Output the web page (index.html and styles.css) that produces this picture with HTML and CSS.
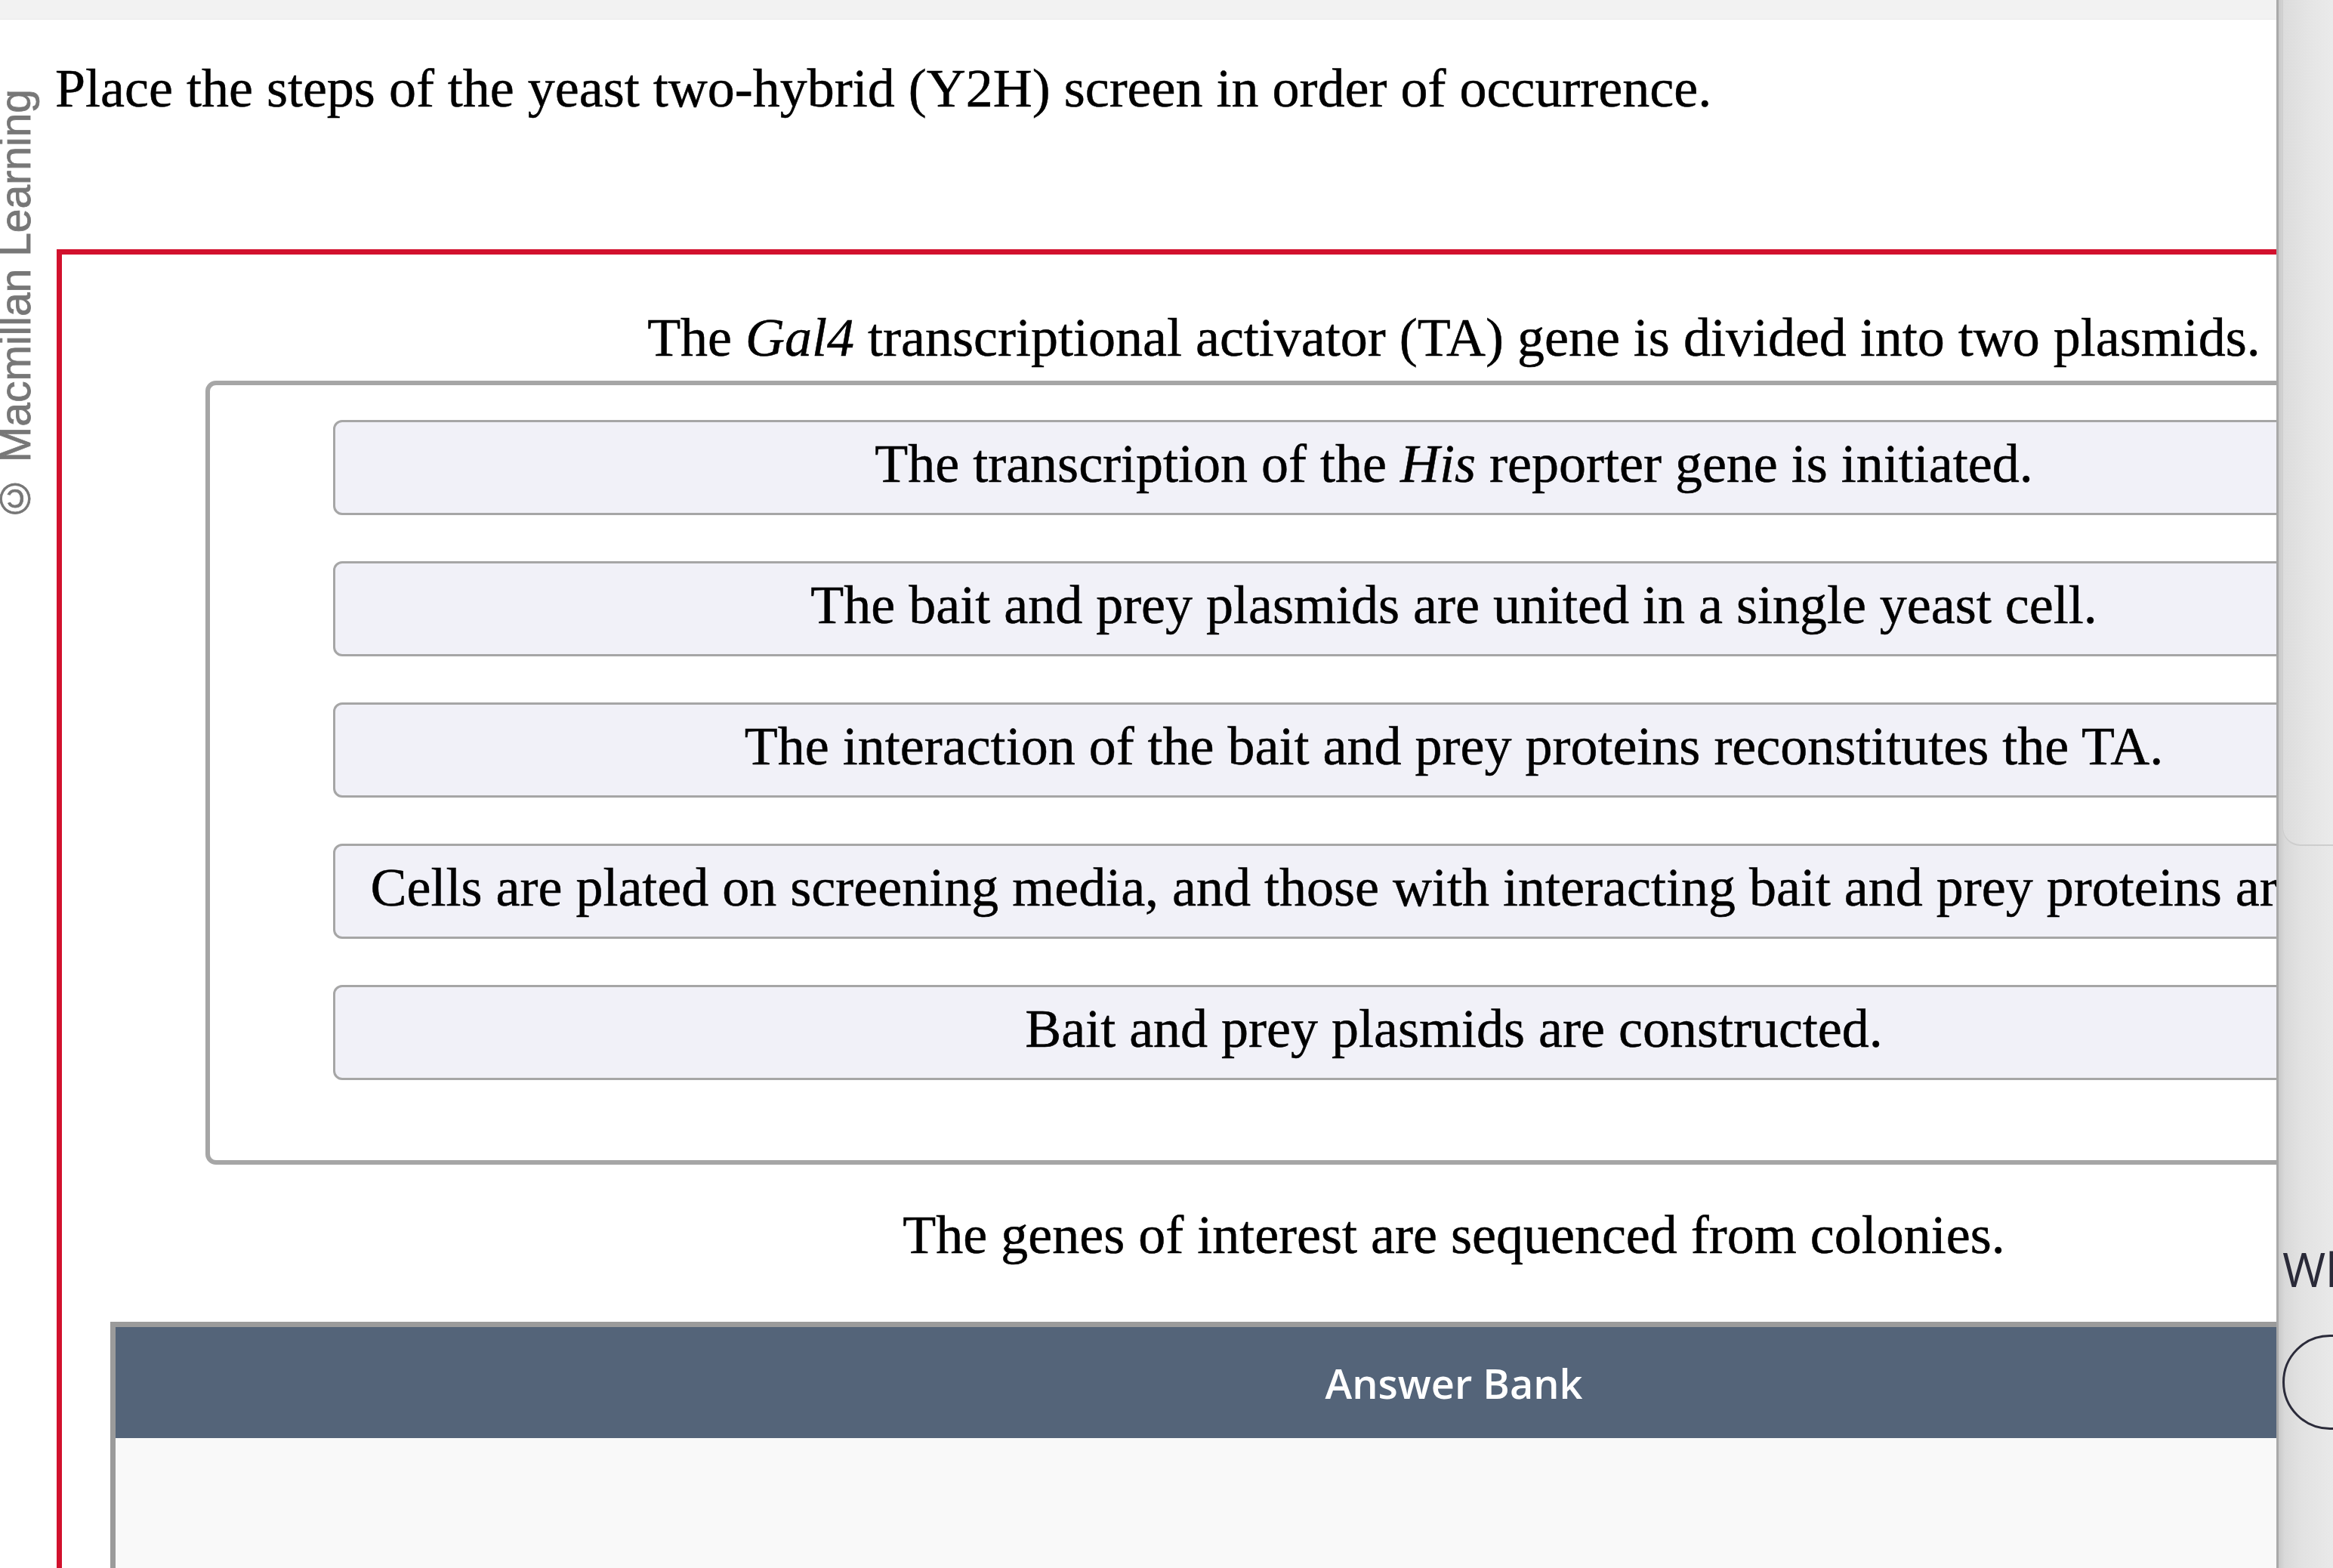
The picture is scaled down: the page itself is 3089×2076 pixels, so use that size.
FILE: index.html
```html
<!DOCTYPE html>
<html lang="en">
<head>
<meta charset="utf-8">
<title>Yeast two-hybrid screen ordering</title>
<link rel="stylesheet" href="styles.css">
</head>
<body>
  <div class="stage">
    <div class="topbar"></div>
    <div class="layout">
      <div class="credit-col">
        <div class="credit">© Macmillan Learning</div>
      </div>
      <div class="content">
        <h1 class="prompt">Place the steps of the yeast two-hybrid (Y2H) screen in order of occurrence.</h1>
        <div class="frame">
          <p class="anchor">The <i>Gal4</i> transcriptional activator (TA) gene is divided into two plasmids.</p>
          <div class="dropzone">
            <div class="item">The transcription of the <i>His</i> reporter gene is initiated.</div>
            <div class="item">The bait and prey plasmids are united in a single yeast cell.</div>
            <div class="item">The interaction of the bait and prey proteins reconstitutes the TA.</div>
            <div class="item">Cells are plated on screening media, and those with interacting bait and prey proteins are identified.</div>
            <div class="item">Bait and prey plasmids are constructed.</div>
          </div>
          <p class="after">The genes of interest are sequenced from colonies.</p>
          <div class="bank">
            <div class="bank-head">Answer Bank</div>
            <div class="bank-body"></div>
          </div>
        </div>
      </div>
    </div>
  </div>
  <aside class="panel">
    <div class="panel-card"></div>
    <div class="panel-q">Wh</div>
    <div class="panel-ring"></div>
  </aside>
</body>
</html>
```

FILE: styles.css
```css
html, body {
  margin: 0;
  padding: 0;
}

body {
  height: 2076px;
  overflow: hidden;
  display: flex;
  background: #ffffff;
  font-family: "Liberation Serif", "Times New Roman", serif;
  color: #000000;
}

.stage {
  width: 3014px;
  height: 2076px;
  flex: none;
  overflow: hidden;
  display: flex;
  flex-direction: column;
  background: #ffffff;
}

.topbar {
  height: 26px;
  flex: none;
  box-sizing: border-box;
  background: #f2f2f2;
  border-bottom: 1px solid #e9e9e9;
}

.layout {
  display: flex;
  flex: 1;
  min-height: 0;
}

.credit-col {
  width: 73px;
  flex: none;
  box-sizing: border-box;
  padding-top: 92px;
}

.credit {
  writing-mode: vertical-rl;
  transform: rotate(180deg);
  font-family: "Liberation Sans", Arial, sans-serif;
  font-size: 57px;
  line-height: 56px;
  color: #777777;
  -webkit-text-stroke: 0.8px #777777;
  margin-left: -8px;
  white-space: nowrap;
}

.content {
  width: 3704px;
  flex: none;
}

.prompt,
.anchor,
.after,
.item {
  -webkit-text-stroke: 0.5px #000000;
}

.prompt {
  margin: 50px 0 0;
  font-size: 72px;
  line-height: 83px;
  font-weight: normal;
  white-space: nowrap;
}

.frame {
  box-sizing: border-box;
  width: 3700px;
  margin: 171px 0 0 2px;
  border: 7px solid #d2112d;
  padding: 69px 0 120px;
}

.anchor,
.after {
  margin: 0;
  text-align: center;
  font-size: 72px;
  line-height: 83px;
  white-space: nowrap;
}

.dropzone {
  box-sizing: border-box;
  width: 3306px;
  margin: 15px auto 0;
  border: 6px solid #a6a6a6;
  border-radius: 14px;
  padding: 46px 0 106px;
  display: flex;
  flex-direction: column;
  align-items: center;
  gap: 61px;
}

.item {
  box-sizing: border-box;
  width: 2968px;
  height: 126px;
  flex: none;
  border: 3px solid #a6a6a6;
  border-radius: 12px;
  background: #f1f1f8;
  padding: 0 29px;
  text-align: center;
  font-size: 72px;
  line-height: 110px;
  white-space: nowrap;
  overflow: hidden;
}

.after {
  margin-top: 52px;
}

.bank {
  box-sizing: border-box;
  width: 3558px;
  margin: 73px auto 0;
  border: 7px solid #9b9b9b;
  border-bottom: none;
  background: #f9f9f9;
}

.bank-head {
  height: 147px;
  background: #546479;
  color: #ffffff;
  font-family: "Open Sans", "Liberation Sans", sans-serif;
  font-size: 54px;
  font-weight: 600;
  display: flex;
  align-items: center;
  justify-content: center;
}

.bank-body {
  height: 400px;
}

.panel {
  flex: 1;
  min-width: 0;
  height: 2076px;
  overflow: hidden;
  box-sizing: border-box;
  border-left: 3px solid #a9a9a9;
  background: linear-gradient(to right, #c9c9c9 0, #d9d9d9 8px, #e2e2e2 30px, #e9e9e9 72px);
}

.panel-card {
  height: 1120px;
  margin-left: 5px;
  box-sizing: border-box;
  border-left: 1px solid #cdcdcd;
  border-bottom: 2px solid #cdcdcd;
  border-bottom-left-radius: 24px;
  background: linear-gradient(to right, #dcdcdc 0, #e6e6e6 40px, #ebebeb 70px);
}

.panel-q {
  margin: 530px 0 0 5px;
  font-family: "Open Sans", "Liberation Sans", sans-serif;
  font-size: 62px;
  font-weight: 500;
  line-height: 60px;
  color: #2a2a38;
  white-space: nowrap;
}

.panel-ring {
  width: 126px;
  height: 126px;
  box-sizing: border-box;
  margin: 57px 0 0 5px;
  border: 3px solid #2b2b3a;
  border-radius: 50%;
}
```
